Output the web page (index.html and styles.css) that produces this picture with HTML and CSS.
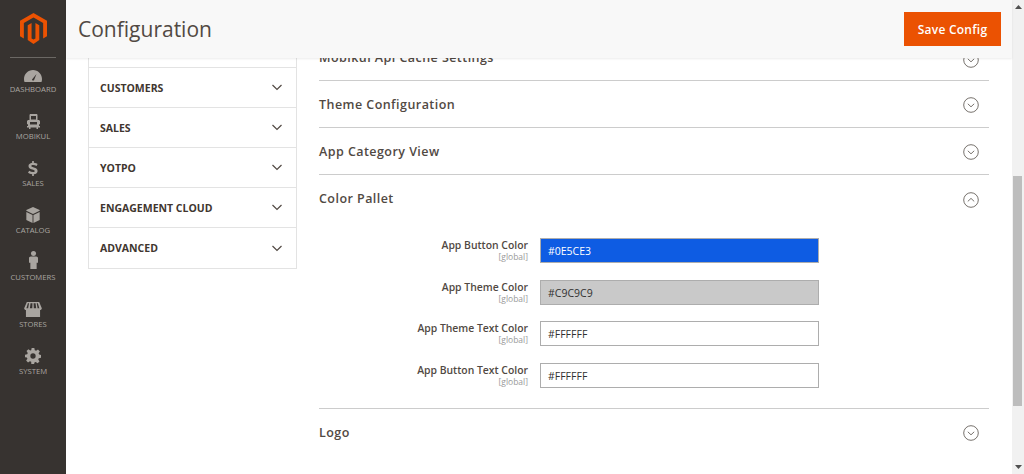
FILE: index.html
```html
<!DOCTYPE html>
<html lang="en">
<head>
<meta charset="utf-8">
<title>Configuration</title>
<link rel="stylesheet" href="styles.css">
</head>
<body>
<div class="page">
  <aside class="sidebar">
    <div class="logo">
      <svg width="27" height="31" viewBox="1.500 0 21 24"><path fill="#eb5202" d="M12 0 1.500 6v12l3 1.700V7.700L12 3.400l7.500 4.300v12l3-1.700V6z"/><path fill="#eb5202" d="M13.500 19.700l-1.500.9-1.500-.9V7.800L7.500 9.500V21l4.500 3 4.500-3V9.500l-3-1.700z"/></svg>
    </div>
    <nav class="menu">
      <a class="menu-item"><svg width="18" height="12" viewBox="0 0 18 12"><path fill="#a9a5a0" fill-rule="evenodd" d="M9 0C4 0 0 4 0 9c0 1 .1 2 .5 3h17c.4-1 .5-2 .5-3 0-5-4-9-9-9zM8 9.500 12.500 4 10 10.300A1.200 1.200 0 0 1 8 9.500z"/></svg><span>DASHBOARD</span></a>
      <a class="menu-item"><svg width="13" height="15" viewBox="0 0 13 15"><path fill="#a9a5a0" fill-rule="evenodd" d="M3 0h7l.5 1v5H12l1 1v3l-1 .5V12h1v1.500h-2V15H9.500v-1.500h-6V15H2v-1.500H0V12h1v-1.500L0 10V7l1-1h1.500V1zm1 2v3.500h5V2zM3 8v2.500h7V8z"/></svg><span>MOBIKUL</span></a>
      <a class="menu-item"><svg width="10" height="15" viewBox="0 0 12 18"><path fill="#a9a5a0" d="M5 0h2v2c2 .2 3.500.8 4.500 1.500L10.300 6C9 5.300 7.500 4.900 6 4.900c-1.300 0-2 .4-2 1.100 0 .8 1 1.100 3 1.700 3 .8 4.500 2 4.500 4.300 0 2.200-1.600 3.700-4.500 4V18H5v-2c-2-.2-3.700-.9-5-1.900l1.400-2.400c1.500 1 3.100 1.600 4.700 1.600 1.300 0 2-.4 2-1.200S7 10.900 5 10.300C2.200 9.500.6 8.400.6 6.100.6 4 2.200 2.500 5 2.100z"/></svg><span>SALES</span></a>
      <a class="menu-item"><svg width="14" height="16" viewBox="0 0 15 18"><path fill="#a9a5a0" d="M7.500 0 15 3.500v.8L7.500 8 0 4.300v-.8zM0 5.500l7 3.500v9l-7-3.500zM15 5.500V14.500L8 18V9z"/></svg><span>CATALOG</span></a>
      <a class="menu-item menu-tall"><svg width="9" height="18" viewBox="0 0 10 20"><circle fill="#a9a5a0" cx="5" cy="2.800" r="2.800"/><path fill="#a9a5a0" d="M2 6h6c1.200 0 2 .8 2 2v5H8.500v7h-7v-7H0V8c0-1.200.8-2 2-2z"/></svg><span>CUSTOMERS</span></a>
      <a class="menu-item"><svg width="18" height="15" viewBox="0 0 20 17"><path fill="#a9a5a0" fill-rule="evenodd" d="M3 0h14l3 7c0 1.300-1 2-2 2v8H2V9C1 9 0 8.300 0 7zm1.200 1.500L2.500 7h2l1-5.500zm3 0L6.500 7h2.700l.2-5.500zm3.500 0 .2 5.500h2.700l-.7-5.500zm3.500 0 1 5.500h2l-1.700-5.500z"/></svg><span>STORES</span></a>
      <a class="menu-item"><svg width="16" height="16" viewBox="0 0 18 18"><path fill="#a9a5a0" fill-rule="evenodd" d="M7.500 0h3l.5 2.500 1.500.6 2.100-1.400 2.100 2.100-1.400 2.100.6 1.500 2.100.6v3l-2.500.5-.6 1.500 1.400 2.100-2.100 2.100-2.100-1.400-1.500.6-.5 2.400h-3L7 15.500l-1.500-.6-2.100 1.400-2.100-2.100 1.400-2.100-.6-1.500L0 10.500v-3l2.500-.5.6-1.500-1.400-2.100 2.100-2.100 2.100 1.400L7 2.500zM9 6a3 3 0 1 0 0 6 3 3 0 0 0 0-6z"/></svg><span>SYSTEM</span></a>
    </nav>
  </aside>

  <main class="main">
    <header class="topbar">
      <h1 class="title">Configuration</h1>
      <button class="save">Save Config</button>
    </header>
    <div class="columns">
      <div class="tabs">
        <div class="tab-spacer"></div>
        <div class="tab"><span>CUSTOMERS</span><svg class="chev" width="10" height="7" viewBox="0 0 10 7"><path d="M.5 1l4.500 4.500L9.500 1" fill="none" stroke="#514943" stroke-width="1.200"/></svg></div>
        <div class="tab"><span>SALES</span><svg class="chev" width="10" height="7" viewBox="0 0 10 7"><path d="M.5 1l4.500 4.500L9.500 1" fill="none" stroke="#514943" stroke-width="1.200"/></svg></div>
        <div class="tab"><span>YOTPO</span><svg class="chev" width="10" height="7" viewBox="0 0 10 7"><path d="M.5 1l4.500 4.500L9.500 1" fill="none" stroke="#514943" stroke-width="1.200"/></svg></div>
        <div class="tab"><span>ENGAGEMENT CLOUD</span><svg class="chev" width="10" height="7" viewBox="0 0 10 7"><path d="M.5 1l4.500 4.500L9.500 1" fill="none" stroke="#514943" stroke-width="1.200"/></svg></div>
        <div class="tab"><span>ADVANCED</span><svg class="chev" width="10" height="7" viewBox="0 0 10 7"><path d="M.5 1l4.500 4.500L9.500 1" fill="none" stroke="#514943" stroke-width="1.200"/></svg></div>
      </div>
      <div class="sections">
        <div class="section section-clipped"><span class="section-title">Mobikul Api Cache Settings</span><svg class="circ" width="16" height="16" viewBox="0 0 16 16"><circle cx="8" cy="8" r="7.300" fill="none" stroke="#77726d"/><path d="M4.800 6.800 8 9.800l3.200-3" fill="none" stroke="#77726d"/></svg></div>
        <div class="section"><span class="section-title">Theme Configuration</span><svg class="circ" width="16" height="16" viewBox="0 0 16 16"><circle cx="8" cy="8" r="7.300" fill="none" stroke="#77726d"/><path d="M4.800 6.800 8 9.800l3.200-3" fill="none" stroke="#77726d"/></svg></div>
        <div class="section"><span class="section-title">App Category View</span><svg class="circ" width="16" height="16" viewBox="0 0 16 16"><circle cx="8" cy="8" r="7.300" fill="none" stroke="#77726d"/><path d="M4.800 6.800 8 9.800l3.200-3" fill="none" stroke="#77726d"/></svg></div>
        <div class="section section-open">
          <div class="section-head"><span class="section-title">Color Pallet</span><svg class="circ" width="16" height="16" viewBox="0 0 16 16"><circle cx="8" cy="8" r="7.300" fill="none" stroke="#77726d"/><path d="M4.800 9.400 8 6.400l3.200 3" fill="none" stroke="#77726d"/></svg></div>
          <div class="fields">
            <div class="field"><div class="label"><span class="name">App Button Color</span><span class="scope">[global]</span></div><div class="value value-blue">#0E5CE3</div></div>
            <div class="field"><div class="label"><span class="name">App Theme Color</span><span class="scope">[global]</span></div><div class="value value-grey">#C9C9C9</div></div>
            <div class="field"><div class="label"><span class="name">App Theme Text Color</span><span class="scope">[global]</span></div><div class="value">#FFFFFF</div></div>
            <div class="field"><div class="label"><span class="name">App Button Text Color</span><span class="scope">[global]</span></div><div class="value">#FFFFFF</div></div>
          </div>
        </div>
        <div class="section section-last"><span class="section-title">Logo</span><svg class="circ" width="16" height="16" viewBox="0 0 16 16"><circle cx="8" cy="8" r="7.300" fill="none" stroke="#77726d"/><path d="M4.800 6.800 8 9.800l3.200-3" fill="none" stroke="#77726d"/></svg></div>
      </div>
    </div>
  </main>

  <div class="scrollbar">
    <svg class="arrow" width="7" height="4" viewBox="0 0 7 4"><path d="M3.500 0 7 4H0z" fill="#505050"/></svg>
    <div class="track"><div class="thumb"></div></div>
    <svg class="arrow" width="7" height="4" viewBox="0 0 7 4"><path d="M0 0h7L3.500 4z" fill="#505050"/></svg>
  </div>
</div>
</body>
</html>
```
FILE: styles.css
```css
* { box-sizing: border-box; }
html, body { margin: 0; height: 100%; overflow: hidden; }
body { font-family: "Open Sans", sans-serif; color: #41362f; background: #fff; }
.page { display: flex; width: 1024px; height: 474px; }

.sidebar { width: 66px; flex: none; background: #373330; display: flex; flex-direction: column; align-items: center; }
.logo { height: 58px; width: 46px; flex: none; padding-top: 13px; display: flex; justify-content: center; align-items: flex-start; border-bottom: 1px solid #6b6864; }
.menu { display: flex; flex-direction: column; width: 100%; }
.menu-item { height: 47px; display: flex; flex-direction: column; align-items: center; justify-content: flex-end; gap: 2px; padding-bottom: 10px; color: #a9a5a0; font-size: 7.700px; line-height: 11px; }
.menu-tall { gap: 3px; }

.main { flex: 1; min-width: 0; display: flex; flex-direction: column; }
.topbar { height: 58px; flex: none; display: flex; justify-content: space-between; align-items: center; padding: 0 11px 0 12px; background: #f8f8f8; box-shadow: 0 1px 2px rgba(0,0,0,.08); position: relative; z-index: 1; }
.title { margin: 0; font-size: 21px; font-weight: 400; color: #514943; line-height: 30px; }
.save { width: 97px; height: 34px; border: 0; background: #eb5202; color: #fff; font: 600 12px "Open Sans", sans-serif; letter-spacing: .25px; padding: 0; }

.columns { flex: 1; min-height: 0; display: flex; padding-left: 22px; overflow: hidden; }
.tabs { width: 209px; flex: none; align-self: flex-start; border: solid #e3e3e3; border-width: 0 1px 1px; background: #fff; }
.tab-spacer { height: 10px; border-bottom: 1px solid #e3e3e3; }
.tab { height: 40px; display: flex; align-items: center; justify-content: space-between; padding: 0 14px 0 11px; border-bottom: 1px solid #e3e3e3; font-size: 10.500px; font-weight: 700; color: #41362f; }
.tab:last-child { border-bottom: 0; }

.sections { width: 670px; flex: none; margin-left: 22px; }
.section { height: 47px; display: flex; align-items: center; justify-content: space-between; padding-right: 10px; border-bottom: 1px solid #cccccc; }
.section-clipped { height: 23px; align-items: flex-end; overflow: hidden; }
.section-clipped .section-title { margin-bottom: 14px; }
.section-clipped .circ { margin-bottom: 13px; }
.section-title { font-size: 12.500px; font-weight: 600; line-height: 17px; letter-spacing: .45px; color: #514943; }
.circ { position: relative; top: 1px; }
.section-open { height: auto; display: block; padding-right: 0; }
.section-head { height: 47px; display: flex; align-items: center; justify-content: space-between; padding-right: 10px; }
.section-last { border-bottom: 0; }

.fields { padding-top: 16px; padding-bottom: 20px; display: flex; flex-direction: column; gap: 16.600px; }
.field { display: flex; gap: 12px; align-items: flex-start; }
.label { width: 209px; display: flex; flex-direction: column; align-items: flex-end; }
.name { font-size: 10.400px; font-weight: 600; line-height: 14px; color: #514943; }
.scope { font-size: 8.500px; line-height: 9px; color: #9a9a9a; }
.value { width: 279px; height: 25px; border: 1px solid #adadad; background: #fff; padding: 0 7px; font-size: 10.500px; line-height: 24px; color: #303030; }
.value-blue { background: #0e5ce3; color: #fff; }
.value-grey { background: #c9c9c9; color: #303030; }

.scrollbar { width: 12px; flex: none; background: #f1f1f1; display: flex; flex-direction: column; align-items: center; padding: 5px 0; }
.track { flex: 1; width: 100%; padding: 167px 2px 59px 1px; }
.thumb { height: 100%; background: #bdbdbd; }
```
